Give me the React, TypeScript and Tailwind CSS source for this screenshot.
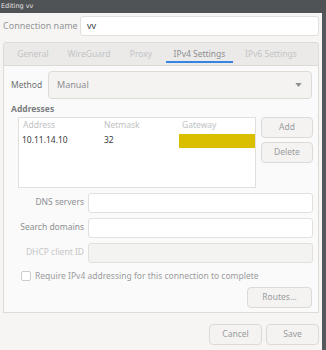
import React from 'react';

const font = { fontFamily: '"Noto Sans", "DejaVu Sans", sans-serif' };

const Button: React.FC<{ label: string; className?: string }> = ({ label, className = '' }) => (
  <div
    className={`flex items-center justify-center rounded-[4px] border border-[#dcd9d6] bg-[#f4f3f2] text-[8.5px] text-[#9a9c9d] ${className}`}
  >
    {label}
  </div>
);

const FormRow: React.FC<{ label: string; disabled?: boolean }> = ({ label, disabled }) => (
  <div className="flex h-[20px] items-center">
    <div className={`w-[80px] whitespace-nowrap text-right text-[8.5px] ${disabled ? 'text-[#c4c6c7]' : 'text-[#8d9091]'}`}>{label}</div>
    <div
      className={`ml-[4px] h-[20px] w-[225px] rounded-[3px] border border-[#e2dfdc] ${disabled ? 'bg-[#f3f3f2]' : 'bg-white'}`}
    />
  </div>
);

export default function App() {
  const tabs = [
    { label: 'General', w: 'w-[58px]' },
    { label: 'WireGuard', w: 'w-[54px]' },
    { label: 'Proxy', w: 'w-[50px]' },
    { label: 'IPv4 Settings', w: 'w-[67px]', active: true },
    { label: 'IPv6 Settings', w: 'w-[76px]' },
  ];

  return (
    <div className="flex h-[350px] w-[326px] flex-col overflow-hidden bg-[#f6f5f4]" style={font}>
      {/* title bar */}
      <div className="flex h-[13px] items-center bg-[#505356] pl-[1px] text-[6.5px] leading-none text-[#e4e4e4]" style={{ fontFamily: '"DejaVu Sans", sans-serif' }}>
        Editing vv
      </div>

      <div className="flex flex-1">
        <div className="flex w-[322px] flex-col">
          {/* connection name */}
          <div className="mt-[3px] flex h-[20px] items-center">
            <div className="w-[80px] whitespace-nowrap pl-[3px] text-[9px] text-[#939697]">Connection name</div>
            <div className="flex h-[20px] w-[239px] items-center rounded-[3px] border border-[#e2dfdc] bg-white pl-[6px] text-[9px] text-[#3a3c3d]">
              vv
            </div>
          </div>

          {/* notebook */}
          <div className="ml-[3px] mt-[6px] w-[316px]">
            <div className="flex h-[24px] items-stretch rounded-t-[3px] border border-[#dedad6] bg-[#ebeae9]">
              {tabs.map((t) => (
                <div key={t.label} className={`relative flex items-center justify-center whitespace-nowrap text-[8.5px] ${t.w} ${t.active ? 'text-[#8d9091]' : 'text-[#c3c4c4]'}`}>
                  {t.label}
                  {t.active && <div className="absolute bottom-[2px] left-0 right-0 h-[2px] bg-[#3584e4]" />}
                </div>
              ))}
            </div>

            <div className="flex h-[247px] flex-col border-x border-b border-[#dedad6] bg-[#fafafa]">
              {/* method */}
              <div className="mt-[5px] flex h-[28px] items-center">
                <div className="w-[44px] pl-[7px] text-[8.5px] text-[#6f7273]">Method</div>
                <div className="flex h-[28px] w-[264px] items-center justify-between rounded-[4px] border border-[#dedad6] bg-[#f4f3f2] pl-[8px] pr-[9px] text-[9px] text-[#8d9091]">
                  Manual
                  <svg width="7" height="4" viewBox="0 0 8 5">
                    <path d="M0 0 L8 0 L4 5 Z" fill="#8d9091" />
                  </svg>
                </div>
              </div>

              {/* addresses */}
              <div className="mt-[4px] pl-[7px] text-[8.5px] font-bold text-[#7b7e7f]">Addresses</div>
              <div className="mt-[1px] flex">
                <div className="ml-[14px] h-[71px] w-[238px] border border-[#e2dfdc] bg-white text-[8.5px]">
                  <div className="flex h-[16px] items-center text-[#c0c2c3]">
                    <div className="w-[82px] pl-[4px]">Address</div>
                    <div className="w-[78px] pl-[3px]">Netmask</div>
                    <div className="pl-[3px]">Gateway</div>
                  </div>
                  <div className="flex h-[14px] items-center text-[#3a3c3d]">
                    <div className="w-[82px] pl-[3px]">10.11.14.10</div>
                    <div className="w-[78px] pl-[3px]">32</div>
                    <div className="h-[14px] flex-1 bg-[#dabf00]" />
                  </div>
                </div>
                <div className="ml-[5px] flex flex-col gap-[4px]">
                  <Button label="Add" className="h-[21px] w-[52px]" />
                  <Button label="Delete" className="h-[21px] w-[52px]" />
                </div>
              </div>

              {/* form rows */}
              <div className="mt-[5px] flex flex-col gap-[5px]">
                <FormRow label="DNS servers" />
                <FormRow label="Search domains" />
                <FormRow label="DHCP client ID" disabled />
              </div>

              {/* checkbox */}
              <div className="ml-[17px] mt-[7px] flex items-center gap-[4px] whitespace-nowrap text-[8.5px] text-[#9a9c9d]">
                <div className="h-[10px] w-[10px] rounded-[2px] border border-[#cfccc9] bg-white" />
                Require IPv4 addressing for this connection to complete
              </div>

              <div className="mt-[4px] flex justify-end pr-[6px]">
                <Button label="Routes…" className="h-[21px] w-[65px]" />
              </div>
            </div>
          </div>

          {/* dialog buttons */}
          <div className="mt-[11px] flex justify-end gap-[4px] pr-[3px]">
            <Button label="Cancel" className="h-[21px] w-[53px]" />
            <Button label="Save" className="h-[21px] w-[53px]" />
          </div>
        </div>
        <div className="w-[4px] bg-[#56595c]" />
      </div>
    </div>
  );
}
